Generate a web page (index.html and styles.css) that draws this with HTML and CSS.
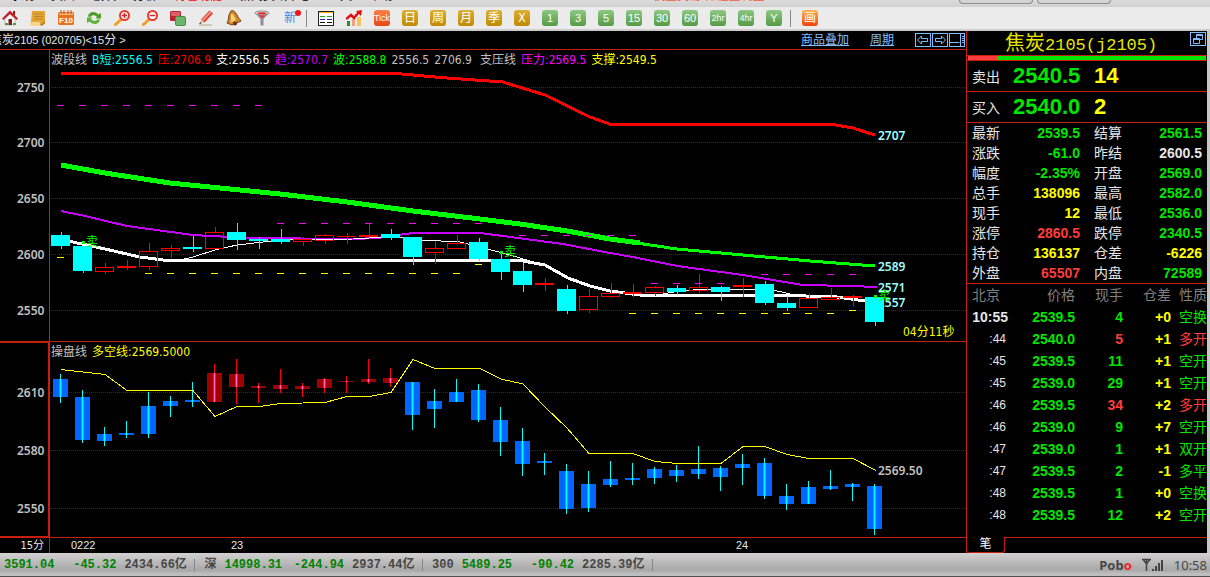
FILE: index.html
```
<!DOCTYPE html>
<html lang="zh-CN">

<head>
    <meta charset="UTF-8">
    <meta name="viewport" content="width=device-width, initial-scale=1.0">
    <title>焦炭2105 (j2105)</title>
    <link rel="stylesheet" href="styles.css">
</head>

<body>

    <div class="menubar">
        <nav class="menu">
            <span>系统</span>
            <span>页面</span>
            <span>板块</span>
            <span>分析</span>
            <span class="hot">特色功能</span>
            <span>新闻资讯中心</span>
            <span>工具</span>
            <span>帮助</span>
        </nav>
        <span class="notice">夜盘交易 保证金调整</span>
        <div class="menu-tabs"><i></i><i></i></div>
    </div>

    <div class="toolbar">
        <div class="tools">
            <button class="icon" aria-label="首页"><svg viewBox="0 0 16 16"><path d="M3 8v7h10V8L8 4z" fill="#f6f6f6" stroke="#999" stroke-width=".6" /><path d="M11 1h2v4h-2z" fill="#a11" /><path d="M0 8.500L8 .5l8 8-1.500 1.500L8 4 1.500 10z" fill="#c8202a" /><path d="M6.500 9h3.500v6H6.500z" fill="#7a1a1a" /><path d="M3 13h3v2H3zM11 13h3v2h-3z" fill="#5a9b3c" /></svg></button>
            <button class="icon" aria-label="公告"><svg viewBox="0 0 16 16"><path d="M2 1h13v11c0 2-1 3-3 3H1V12z" fill="#e3a534" /><path d="M4 4h9M4 6.500h9M4 9h9" stroke="#c08428" stroke-width="1" /><path d="M0 12h10v2c0 1-1 2-2 2H2c-1 0-2-1-2-2z" fill="#f5d68c" /><path d="M10 15l5-4v2l-3 3z" fill="#b77d1c" /></svg></button>
            <button class="icon" aria-label="F10"><svg viewBox="0 0 16 16"><rect y="2" width="16" height="13" rx="1.500" fill="#e8731c" /><rect x="1" y="3" width="14" height="2" fill="#f8b47a" /><path d="M3 0v4M6 0v4M10 0v4M13 0v4" stroke="#b5551a" /><text x="8" y="13" class="f10">F10</text></svg></button>
            <button class="icon" aria-label="刷新"><svg viewBox="0 0 16 16"><path d="M2 6.500C2.500 1.500 9 .5 12.500 4.500L15 3v5.500H9.500l1.500-1.500C9 4.500 6 4.500 4.500 7z" fill="#4d9e2b" /><path d="M14 9.500C13.500 14.500 7 15.500 3.500 11.500L1 13V7.500h5.500L5 9c2 2.500 5 2.500 6.500.5z" fill="#5fb238" /></svg></button>
            <button class="icon" aria-label="放大"><svg viewBox="0 0 16 16"><path d="M1.500 14.500L7 9.500" stroke="#f0a01e" stroke-width="3" stroke-linecap="round" /><circle cx="10.500" cy="5.500" r="4.500" fill="#fff" stroke="#e23b30" stroke-width="2" /><path d="M8 5.500h5M10.500 3v5" stroke="#d22" stroke-width="1.500" /></svg></button>
            <button class="icon" aria-label="缩小"><svg viewBox="0 0 16 16"><path d="M1.500 14.500L7 9.500" stroke="#f0a01e" stroke-width="3" stroke-linecap="round" /><circle cx="10.500" cy="5.500" r="4.500" fill="#fff" stroke="#e23b30" stroke-width="2" /><path d="M8 5.500h5" stroke="#d22" stroke-width="1.500" /></svg></button>
            <button class="icon" aria-label="叠加"><svg viewBox="0 0 16 16"><rect y="1" width="11" height="10" rx="1.500" fill="#b9242c" /><rect x="1" y="2" width="9" height="4" rx="1" fill="#d8626a" /><rect x="5.500" y="6.500" width="10" height="9" rx="1.500" fill="#6db56a" stroke="#4c8c4a" /></svg></button>
            <button class="icon" aria-label="画线"><svg viewBox="0 0 16 16"><path d="M3 9.500L11.500 .5l3.500 3-8.500 9z" fill="#dc3c30" /><path d="M4 9.500l8.500-8.500 1.500 1-8.500 8.800z" fill="#f59a8c" /><path d="M3 9.500l3.500 3-4.500 1z" fill="#efc79a" /><path d="M1 14l1.500-2 1 1.500z" fill="#333" /><path d="M1 15h13" stroke="#bba47c" /></svg></button>
            <button class="icon" aria-label="预警"><svg viewBox="0 0 16 16"><path d="M5 1c3-1 4 1 6 4 1 3 3 4 4 6l-9 4-5-2c2-3 1-5 2-8z" fill="#cf8726" stroke="#7a3f10" /><path d="M5 4c2-1 3 2 5 6l-6 3c2-3 0-6 1-9z" fill="#f5cf73" /><circle cx="9" cy="13.500" r="2" fill="#7a2e10" /></svg></button>
            <button class="icon" aria-label="筛选"><svg viewBox="0 0 16 16"><path d="M1 3l5.500 6v6.500H9.500V9L15 3z" fill="#8b8f94" /><path d="M4 4h8L8.200 8.500z" fill="#e33" /><ellipse cx="8" cy="3" rx="7" ry="2" fill="#e4e4e4" stroke="#85898d" /><ellipse cx="8" cy="3.300" rx="4.500" ry="1" fill="#e22" /></svg></button>
            <button class="icon new">新</button>
        </div>
        <div class="tools">
            <button class="icon" aria-label="报价"><svg viewBox="0 0 16 16"><rect x=".5" y="1.500" width="15" height="14" fill="#fff" stroke="#222" /><path d="M1 2.500h14" stroke="#f5b300" /><path d="M2 6.500h5M9 6.500h5" stroke="#2a2" /><path d="M2 9.500h5M9 9.500h5" stroke="#22a" /><path d="M2 12.500h5M9 12.500h5" stroke="#111" /></svg></button>
            <button class="icon" aria-label="走势"><svg viewBox="0 0 16 16"><path d="M1 11h3v5H1z" fill="#2d8a2d" /><path d="M6 9h3v7H6z" fill="#f0a080" /><path d="M11 7h4v9h-4z" fill="#f3c65a" /><path d="M0 9l5-4 3 3 5-6" stroke="#e01010" stroke-width="2.500" fill="none" /><path d="M10 1l6-1-1 6z" fill="#e01010" /></svg></button>
            <button class="icon tick">Tick</button>
            <button class="icon day">日</button>
            <button class="icon day">周</button>
            <button class="icon day">月</button>
            <button class="icon day">季</button>
            <button class="icon day">X</button>
            <button class="icon min">1</button>
            <button class="icon min">3</button>
            <button class="icon min">5</button>
            <button class="icon min">15</button>
            <button class="icon min">30</button>
            <button class="icon min">60</button>
            <button class="icon min hr">2hr</button>
            <button class="icon min hr">4hr</button>
            <button class="icon min">Y</button>
        </div>
        <div class="tools">
            <button class="icon tick draw">画</button>
        </div>
    </div>

    <main class="workspace">
        <section class="charts">
            <header class="chart-head">
                <h1>焦炭<span>2105 (020705)&lt;15</span>分<span> &gt;</span></h1>
                <a href="#">商品叠加</a>
                <a href="#">周期</a>
                <div class="head-icons">
                    <button class="box" aria-label="前一个"><svg viewBox="0 0 14 12"><path d="M1.500 6L5.500 2v2.500h6v3h-6V10z" /></svg></button>
                    <button class="box" aria-label="后一个"><svg viewBox="0 0 14 12"><path d="M12.500 6L8.500 2v2.500h-6v3h6V10z" /></svg></button>
                    <button class="box" aria-label="布局"><svg viewBox="0 0 14 12"><path d="M0 8.500h9.500M10.500 0v12M12 2.500h2M12 4.500h2M12 6.500h2M12 8.500h2" /></svg></button>
                </div>
            </header>

            <div class="panel">
                <div class="axis"><svg id="axisTop" height="291"></svg></div>
                <div class="plot">
                    <div class="legend">
                        <span>波段线</span>
                        <span class="cyan">B短:2556.5</span>
                        <span class="red">压:2706.9</span>
                        <span class="white">支:2556.5</span>
                        <span class="purple">趋:2570.7</span>
                        <span class="green">波:2588.8</span>
                        <span>2556.5</span>
                        <span>2706.9</span>
                        <span class="second">支压线</span>
                        <span class="magenta">压力:2569.5</span>
                        <span class="yellow">支撑:2549.5</span>
                    </div>
                    <svg id="mainChart" height="273"></svg>
                </div>
            </div>

            <div class="panel sub">
                <div class="axis selected"><svg id="axisSub" height="191"></svg></div>
                <div class="plot">
                    <div class="legend">
                        <span>操盘线</span>
                        <span class="yellow">多空线:2569.5000</span>
                    </div>
                    <svg id="subChart" height="177"></svg>
                </div>
            </div>

            <div class="panel dates">
                <div class="axis">15分</div>
                <div class="plot"><svg id="dateAxis" height="15"></svg></div>
            </div>
        </section>

        <aside class="quote">
            <div class="quote-title">
                <h2>焦炭<span>2105(j2105)</span></h2>
                <button class="box" aria-label="窗口"><svg viewBox="0 0 14 12"><path d="M5.500 1.500h6v5h-6zM5.500 2.500h6M2.500 5.500h6v5h-6zM2.500 6.500h6" /></svg></button>
            </div>
            <div class="ratio"><i></i></div>
            <div class="deal"><span>卖出</span><b>2540.5</b><em>14</em></div>
            <div class="deal"><span>买入</span><b>2540.0</b><em>2</em></div>

            <table class="info">
                <colgroup><col class="c-label"><col class="c-left"><col class="c-label"><col></colgroup>
                <tr><th>最新</th><td class="down">2539.5</td><th>结算</th><td class="down">2561.5</td></tr>
                <tr><th>涨跌</th><td class="down">-61.0</td><th>昨结</th><td class="flat">2600.5</td></tr>
                <tr><th>幅度</th><td class="down">-2.35%</td><th>开盘</th><td class="down">2569.0</td></tr>
                <tr><th>总手</th><td class="vol">138096</td><th>最高</th><td class="down">2582.0</td></tr>
                <tr><th>现手</th><td class="vol">12</td><th>最低</th><td class="down">2536.0</td></tr>
                <tr><th>涨停</th><td class="up">2860.5</td><th>跌停</th><td class="down">2340.5</td></tr>
                <tr><th>持仓</th><td class="vol">136137</td><th>仓差</th><td class="vol">-6226</td></tr>
                <tr><th>外盘</th><td class="up">65507</td><th>内盘</th><td class="down">72589</td></tr>
            </table>

            <table class="ticks">
                <thead>
                    <tr><th>北京</th><th>价格</th><th>现手</th><th>仓差</th><th>性质</th></tr>
                </thead>
                <tbody>
                    <tr><td class="full">10:55</td><td>2539.5</td><td>4</td><td>+0</td><td>空换</td></tr>
                    <tr class="buy"><td>:44</td><td>2540.0</td><td>5</td><td>+1</td><td>多开</td></tr>
                    <tr><td>:45</td><td>2539.5</td><td>11</td><td>+1</td><td>空开</td></tr>
                    <tr><td>:45</td><td>2539.0</td><td>29</td><td>+1</td><td>空开</td></tr>
                    <tr class="buy"><td>:46</td><td>2539.5</td><td>34</td><td>+2</td><td>多开</td></tr>
                    <tr><td>:46</td><td>2539.0</td><td>9</td><td>+7</td><td>空开</td></tr>
                    <tr><td>:47</td><td>2539.0</td><td>1</td><td>+1</td><td>双开</td></tr>
                    <tr><td>:47</td><td>2539.5</td><td>2</td><td>-1</td><td>多平</td></tr>
                    <tr><td>:48</td><td>2539.5</td><td>1</td><td>+0</td><td>空换</td></tr>
                    <tr><td>:48</td><td>2539.5</td><td>12</td><td>+2</td><td>空开</td></tr>
                </tbody>
            </table>

            <div class="tabs"><button class="tab">笔</button><div class="tab-rest"></div></div>
        </aside>
    </main>

    <footer class="status">
        <div class="index"><b>3591.04</b><b class="chg">-45.32</b><span class="amount">2434.66亿</span></div>
        <div class="index"><span class="label">深</span><b>14998.31</b><b class="chg">-244.94</b><span class="amount">2937.44亿</span></div>
        <div class="index"><span class="label">300</span><b>5489.25</b><b class="chg">-90.42</b><span class="amount">2285.39亿</span></div>
        <div class="tray">
            <strong>Pob<i>o</i></strong>
            <svg width="22" height="14" viewBox="0 0 22 14"><path d="M0 1.500h9M1.500 2l3 4 3-4M4.500 2v11" fill="none" stroke="#444" stroke-width="1.500" /><path d="M10 11h2v2h-2zM13 8h2v5h-2zM16 5h2v8h-2zM19 2h2v11h-2z" fill="#444" /></svg>
            <time>10:58</time>
        </div>
    </footer>

    <script src="chart.js"></script>
</body>

</html>
```

FILE: styles.css
```
* {
    margin: 0;
    padding: 0;
    box-sizing: border-box;
}

body {
    min-height: 100vh;
    background: #c8c8c8;
    color: #e6e6e6;
    font-family: "DejaVu Sans Condensed", "Noto Sans CJK SC", sans-serif;
    font-size: 12px;
    overflow: hidden;
}

button {
    border: none;
    background: none;
    font-family: inherit;
    cursor: pointer;
}

svg {
    display: block;
}

/* menu */

.menubar {
    display: flex;
    height: 7px;
    padding-left: 10px;
    overflow: hidden;
    background: linear-gradient(#dcdcdc, #d0d0d0);
    color: #000;
    line-height: 14px;
}

.menu {
    display: flex;
    gap: 17px;
    width: 643px;
    margin-top: -11px;
    white-space: nowrap;
}

.menu .hot,
.notice {
    color: #f00;
}

.notice {
    width: 306px;
    margin-top: -11px;
    color: #f65a3c;
}

.menu-tabs {
    display: flex;
    gap: 4px;
}

.menu-tabs i {
    width: 74px;
    height: 4px;
    border: 1px solid #8c8c8c;
    border-top: none;
    border-radius: 0 0 4px 4px;
    background: #d4d4d4;
}

/* toolbar */

.toolbar {
    display: flex;
    height: 24px;
    padding: 3px 2px;
    background: #ebebeb;
    border-bottom: 2px solid #cdcdcd;
}

.tools {
    display: flex;
    gap: 12px;
    height: 17px;
    padding-right: 8px;
    margin-right: 11px;
    border-right: 1px solid #888;
}

.tools:last-child {
    border: none;
}

.icon {
    width: 16px;
    height: 16px;
    border-radius: 2px;
    color: #fff;
    font-size: 12px;
    line-height: 16px;
    text-align: center;
    white-space: nowrap;
    display: flex;
    justify-content: center;
}

.icon svg {
    width: 16px;
    height: 16px;
}

.f10 {
    font: bold 8px "Liberation Sans", sans-serif;
    fill: #fff;
    text-anchor: middle;
}

.new {
    position: relative;
    color: #3c8ce6;
}

.new::after {
    content: "";
    position: absolute;
    top: 0;
    right: -3px;
    width: 6px;
    height: 6px;
    border-radius: 50%;
    background: #f01414;
}

.day {
    background: linear-gradient(#dcae32, #c08a00);
    border-radius: 3px;
}

.min {
    background: linear-gradient(#8cc882, #559b46);
    border-radius: 3px;
    font-family: "Liberation Sans", sans-serif;
    font-size: 11px;
}

.hr,
.tick {
    font-family: "Liberation Sans", "Noto Sans CJK SC", sans-serif;
    font-size: 9px;
}

.tick {
    background: linear-gradient(#fa8246, #e64614);
    border-radius: 3px;
}

.draw {
    font-size: 12px;
    background: linear-gradient(#ffb450, #f0460a);
}

/* charts */

.workspace {
    display: flex;
    height: 522px;
    padding-right: 3px;
    background: #c8c8c8;
}

.charts {
    flex: 1;
    min-width: 0;
    background: #000;
}

.chart-head {
    display: flex;
    align-items: center;
    height: 19px;
    border-bottom: 1px solid #c81e0f;
    overflow: hidden;
}

.chart-head h1 {
    flex: 1;
    margin-left: -10px;
    font-size: 12px;
    font-weight: normal;
    line-height: 15px;
    white-space: pre;
}

.chart-head h1 span {
    font-family: "Liberation Sans", sans-serif;
    font-size: 11px;
}

.chart-head a {
    margin-right: 21px;
    color: #82beff;
    line-height: 15px;
}

.head-icons {
    display: flex;
    gap: 1px;
    padding-right: 1px;
}

.box {
    width: 16px;
    height: 14px;
    border: 1px solid #82beff;
}

.box svg {
    width: 14px;
    height: 12px;
    fill: none;
    stroke: #82beff;
}

.panel {
    display: flex;
}

.axis {
    width: 50px;
    border-right: 1px solid #c81e0f;
}

.axis svg {
    width: 49px;
}

.plot {
    flex: 1;
    min-width: 0;
}

.plot svg {
    width: 100%;
    overflow: visible;
}

.plot polyline {
    shape-rendering: crispEdges;
}

.legend {
    display: flex;
    gap: 5px;
    height: 18px;
    padding-left: 1px;
    line-height: 21px;
    color: #c0c0c0;
    white-space: nowrap;
}

.second {
    padding-left: 3px;
}

.sub,
.dates {
    border-top: 1px solid #c81e0f;
}

.sub .axis {
    border: solid #c81e0f;
    border-width: 1px 2px 1px 0;
}

.dates .axis {
    padding-right: 5px;
    font-size: 11px;
    line-height: 15px;
    text-align: right;
}

.cyan {
    color: #0ff;
}

.red {
    color: #f00;
}

.white {
    color: #fff;
}

.purple {
    color: #c800ff;
}

.green {
    color: #0f0;
}

.magenta {
    color: #f0f;
}

.yellow {
    color: #ff0;
}

/* svg text */

.scale {
    font: 600 12px "Noto Sans", sans-serif;
    fill: #c0c0c0;
}

.last {
    font: 600 12px "Noto Sans", sans-serif;
    fill: #a0ffff;
}

.sell {
    font: 12px "Noto Sans CJK SC", sans-serif;
    fill: #0f0;
}

.countdown {
    font: 12px "DejaVu Sans Condensed", "Noto Sans CJK SC", sans-serif;
    fill: #ff0;
}

.date {
    font: 11px "Liberation Sans", sans-serif;
    fill: #e6e6e6;
}

/* quote panel */

.quote {
    display: flex;
    flex-direction: column;
    width: 241px;
    background: #000;
    border-left: 1px solid #c81e0f;
}

.quote-title {
    display: flex;
    height: 24px;
    padding: 1px 1px 0 38px;
}

.quote-title h2 {
    flex: 1;
    color: #e6e600;
    font-size: 20px;
    font-weight: normal;
    line-height: 23px;
    white-space: nowrap;
}

.quote-title h2 span {
    font-family: "Liberation Mono", monospace;
    font-size: 17px;
}

.ratio {
    height: 6px;
    padding: 0 1px;
    border: solid #c81e0f;
    border-width: 1px 0;
}

.ratio i {
    display: block;
    height: 4px;
    background: linear-gradient(90deg, #ff3c3c 12%, #00e600 12%);
}

.deal {
    display: flex;
    align-items: center;
    height: 31px;
    padding-left: 5px;
    border-bottom: 1px solid #c81e0f;
    font-size: 14px;
}

.deal span {
    width: 41px;
}

.deal b,
.deal em {
    width: 81px;
    color: #00e600;
    font: bold 22px "Liberation Sans", sans-serif;
}

.deal em {
    color: #ff0;
}

table {
    width: 100%;
    table-layout: fixed;
    border-collapse: collapse;
    font-size: 14px;
}

th {
    font-weight: normal;
    text-align: left;
}

td {
    font-family: "Liberation Sans", "Noto Sans CJK SC", sans-serif;
    font-weight: bold;
    text-align: right;
}

.c-label {
    width: 44px;
}

.c-left {
    width: 78px;
}

.info tr {
    height: 20px;
    line-height: 20px;
}

.info th {
    padding-left: 5px;
}

.info td {
    padding-right: 5px;
}

.info td:nth-child(2) {
    padding-right: 9px;
}

.down {
    color: #00e600;
}

.up {
    color: #ff3c3c;
}

.vol {
    color: #ff0;
}

.ticks {
    border-top: 1px solid #c81e0f;
}

.ticks tr {
    height: 22px;
    line-height: 22px;
}

.ticks th {
    width: 48px;
    color: #808080;
    text-align: right;
}

.ticks th:first-child {
    width: 41px;
    padding-left: 5px;
    text-align: left;
}

.ticks th:nth-child(2) {
    width: auto;
}

.ticks th:last-child {
    width: 36px;
}

.ticks td {
    color: #00e600;
}

.ticks td:first-child {
    padding-right: 2px;
    color: #e6e6e6;
    font-size: 12px;
    font-weight: normal;
}

.ticks td.full {
    padding-right: 0;
    font-size: 14px;
    font-weight: bold;
}

.ticks .buy td:nth-child(3),
.ticks .buy td:last-child {
    color: #ff3c3c;
}

.ticks td:nth-child(4) {
    color: #ff0;
}

.ticks td:last-child {
    font-weight: normal;
}

.tabs {
    display: flex;
    height: 16px;
    margin-top: auto;
}

.tab {
    width: 38px;
    border: solid #c81e0f;
    border-width: 0 1px 1px 0;
    border-radius: 0 0 3px 3px;
    color: #fff;
    font-size: 12px;
    line-height: 15px;
}

.tab-rest {
    flex: 1;
    border-top: 1px solid #c81e0f;
}

/* status bar */

.status {
    display: flex;
    align-items: center;
    height: 24px;
    padding-left: 4px;
    background: linear-gradient(#d2d0d1, #a8a8a8 75%, #bebebe 90%);
    border-bottom: 1px solid #505050;
    color: #464646;
    font: bold 12px "Liberation Mono", "Noto Sans CJK SC", monospace;
}

.index {
    display: flex;
    height: 12px;
    line-height: 12px;
    padding-right: 8px;
    margin-right: 9px;
    border-right: 1px solid #888;
    white-space: nowrap;
}

.index b {
    color: #008200;
}

.index .chg {
    width: 62px;
    text-align: right;
}

.amount {
    width: 70px;
    padding-left: 8px;
}

.label {
    padding-right: 8px;
}

.tray {
    display: flex;
    align-items: center;
    gap: 10px;
    margin-left: auto;
    padding-right: 3px;
    font: 13px "Noto Sans", sans-serif;
}

.tray i {
    color: #ff1e1e;
    font-style: normal;
}
```

FILE: chart.js
```
const RED = "#ff0000";
const CYAN = "#00ffff";
const STEP = 22;

// [direction, high, open/close top, open/close bottom, low]
const mainBars = [
    ["d", 232, 235, 246, 249], ["d", 246, 246, 271, 273], ["u", 263, 267, 272, 274], ["u", 260, 266, 268, 270],
    ["u", 243, 251, 267, 270], ["u", 245, 248, 251, 258], ["d", 236, 247, 249, 252], ["u", 227, 232, 249, 249],
    ["d", 223, 232, 240, 250], ["d", 237, 239, 241, 249], ["d", 229, 239, 242, 244], ["u", 237, 239, 242, 246],
    ["u", 234, 235, 241, 244], ["u", 233, 236, 237, 244], ["u", 223, 235, 237, 237], ["d", 229, 234, 238, 240],
    ["d", 237, 237, 257, 265], ["u", 241, 248, 253, 264], ["u", 235, 243, 249, 249], ["d", 238, 242, 259, 261],
    ["d", 253, 259, 272, 280], ["d", 263, 271, 285, 292], ["u", 278, 283, 285, 291], ["d", 285, 289, 311, 314],
    ["u", 289, 296, 310, 313], ["u", 283, 293, 297, 298], ["u", 284, 292, 294, 297], ["u", 286, 287, 293, 296],
    ["d", 285, 288, 292, 295], ["u", 274, 287, 291, 293], ["d", 286, 287, 292, 301], ["u", 278, 285, 287, 297],
    ["d", 281, 284, 303, 305], ["d", 296, 303, 308, 311], ["u", 294, 298, 308, 308], ["u", 288, 297, 300, 300],
    ["u", 295, 296, 298, 306], ["d", 297, 297, 322, 326]
];

const subBars = [
    ["d", 374, 379, 397, 403], ["d", 390, 397, 440, 443], ["d", 427, 434, 441, 446], ["d", 421, 433, 435, 438],
    ["d", 392, 406, 434, 438], ["d", 396, 401, 406, 417], ["d", 382, 400, 402, 407], ["u", 364, 373, 402, 402],
    ["u", 359, 374, 387, 404], ["u", 383, 386, 388, 403], ["u", 369, 385, 389, 393], ["u", 383, 386, 389, 397],
    ["u", 378, 379, 388, 393], ["u", 376, 381, 382, 393], ["u", 359, 379, 382, 384], ["u", 368, 378, 383, 387],
    ["d", 382, 382, 415, 430], ["d", 389, 401, 409, 428], ["d", 379, 392, 402, 402], ["d", 384, 390, 420, 422],
    ["d", 407, 420, 442, 456], ["d", 428, 441, 464, 476], ["d", 453, 461, 463, 475], ["d", 464, 471, 509, 514],
    ["d", 471, 484, 508, 512], ["d", 461, 479, 485, 487], ["d", 463, 478, 480, 485], ["d", 467, 469, 478, 484],
    ["d", 465, 470, 476, 482], ["d", 446, 469, 474, 479], ["d", 466, 468, 477, 491], ["d", 454, 464, 468, 485],
    ["d", 458, 463, 496, 499], ["d", 484, 496, 504, 510], ["d", 481, 487, 504, 504], ["d", 470, 486, 489, 490],
    ["d", 483, 484, 487, 501], ["d", 484, 486, 529, 535]
];

const rect = (x, y, w, h, fill) => `<rect x="${x}" y="${y}" width="${w}" height="${h}" fill="${fill}"/>`;
const text = (x, y, cls, str) => `<text x="${x}" y="${y}" class="${cls}">${str}</text>`;
const line = (points, color, width) =>
    `<polyline points="${points}" fill="none" stroke="${color}" stroke-width="${width}" stroke-linejoin="round"/>`;

function grid(rows) {
    return rows.map(y => `<line x1="51" x2="966" y1="${y}.5" y2="${y}.5" stroke="#960000" stroke-dasharray="1 1"/>`).join("");
}

// short level marks, one for each bar from..to
function levels(from, to, y, color) {
    let out = "";
    for (let i = from; i <= to; i++) {
        out += rect(57 + i * STEP, y, 7, 1, color);
    }
    return out;
}

function mainCandle([dir, high, top, bottom, low], i) {
    const x = 51 + i * STEP;
    if (dir == "d") {
        return rect(x + 10, high, 1, low - high, CYAN) + rect(x, top, 19, bottom - top, CYAN);
    }
    let out = rect(x + 10, high, 1, top - high, RED) + rect(x + 10, bottom, 1, low - bottom, RED);
    if (bottom - top < 3) {
        return out + rect(x, top, 19, bottom - top, RED);
    }
    return out + `<rect x="${x + .5}" y="${top + .5}" width="18" height="${bottom - top - 1}" fill="none" stroke="${RED}"/>`;
}

function subCandle([dir, high, top, bottom, low], i) {
    const x = 53 + i * STEP;
    const down = dir == "d";
    return rect(x, top, 15, bottom - top, down ? "#0066ff" : "#a00000")
        + rect(x + 6, top, 3, bottom - top, down ? "#00a5ff" : "#dc1e3c")
        + rect(x + 7, high, 1, low - high, down ? CYAN : RED)
        + (down ? "" : rect(x + 7, top, 1, bottom - top, "#ff64c8"));
}

function draw(id, dx, dy, content) {
    document.getElementById(id).innerHTML = `<g transform="translate(${-dx} ${-dy})">${content}</g>`;
}

draw("axisTop", 0, 50, [[87, 2750], [142, 2700], [198, 2650], [254, 2600], [310, 2550]]
    .map(([y, v]) => text(17, y + 5, "scale", v)).join(""));

draw("axisSub", 0, 343, [[392, 2610], [450, 2580], [508, 2550]]
    .map(([y, v]) => text(17, y + 5, "scale", v)).join(""));

draw("mainChart", 50, 68,
    grid([87, 142, 198, 254, 310])
    + text(878, 307, "last", "2557")
    + line("61,73.5 396,73.5 440,77.5 503,82 545,95 590,117 611,124.5 833,124.5 853,128 875,135", RED, 3)
    + line("61,165 105,173 170,183 280,194 347,202 413,211 480,219 520,224 567,231 610,239 640,243", "#00ff00", 5)
    + line("630,242 677,249 743,255 810,261 875,266", "#00ff00", 3)
    + line("61,211 85,216 127,226 193,235 248,238 353,239 377,238 413,233 480,233 503,236 563,244 610,253 633,257 677,266 743,275 767,279 803,285 850,286 877,287", "#c800ff", 2)
    + line("68,241 105,249 140,257 167,260.5 520,260.5 545,265 568,278 590,286 610,291 640,295 657,295.5 790,295.5 837,297 865,301", "#ffffff", 3)
    + line("180,260 193,257 215,250 237,245 280,240 353,239 385,237 400,237 422,240 460,242 487,249 503,253 520,258 540,264", "#ffffff", 1)
    + line("657,295 680,291 700,289.5 773,290 803,297", "#ffffff", 1)
    + levels(0, 9, 105, "#f0f") + levels(10, 19, 223, "#f0f") + levels(20, 26, 235, "#f0f")
    + levels(27, 30, 283, "#f0f") + levels(32, 36, 274, "#f0f")
    + levels(0, 0, 257, "#ff0") + levels(4, 18, 273, "#ff0") + levels(19, 19, 264, "#ff0")
    + levels(26, 35, 313, "#ff0") + levels(36, 36, 310, "#ff0")
    + mainBars.map(mainCandle).join("")
    + [[82, 246], [500, 256], [874, 300]].map(([x, y]) => rect(x, y - 5, 3, 3, "#0f0") + text(x + 4, y, "sell", "卖")).join("")
    + text(878, 140, "last", "2707") + text(878, 271, "last", "2589") + text(878, 292, "last", "2571")
    + text(903, 336, "countdown", "04分11秒")
);

draw("subChart", 50, 360,
    grid([392, 450, 508])
    + subBars.map(subCandle).join("")
    + line("61,369.5 83,372 105,374.5 127,390.5 193,390.5 215,416.5 237,406.5 259,406.5 281,403.5 325,402.5 347,396.5 369,396.5 391,392.5 413,359.5 435,368.5 480,368.5 501,379 523,384 545,407 567,428 589,453.5 633,453.5 655,461.5 677,463.5 721,463.5 743,446.5 765,446.5 787,454.5 809,458.5 853,458.5 876,470.5", "#ffff00", 1)
    + text(878, 475, "scale", "2569.50")
);

draw("dateAxis", 50, 538, text(71, 549, "date", "0222") + text(231, 549, "date", "23") + text(736, 549, "date", "24"));
```
